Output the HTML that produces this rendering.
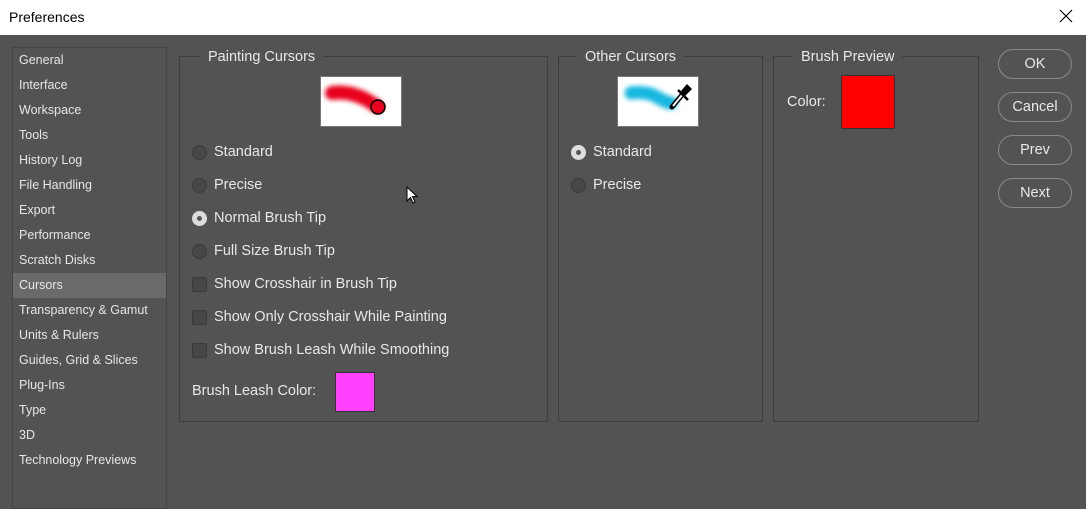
<!DOCTYPE html>
<html><head><style>
body{margin:0;width:1086px;height:497px;background:#535353;font-family:"Liberation Sans",sans-serif;position:relative;overflow:hidden;color:#dcdcdc}
.title{position:absolute;left:0;top:0;width:1086px;height:35px;background:#fff;color:#000;font-size:14px}
.title span{position:absolute;left:9px;top:9px}
.side{position:absolute;left:12px;top:47px;width:153px;height:460px;border:1px solid #444}
.side div{height:25px;line-height:25px;padding-left:6px;font-size:12.5px;color:#e6e6e6}
.side .sel{background:#6a6a6a}
.box{position:absolute;border:1px solid #3e3e3e;top:56px;height:364px}
.lg{position:absolute;top:-8px;background:#535353;padding:0 8px;font-size:14.5px;color:#e8e8e8}
.lbl{position:absolute;font-size:14.5px;color:#e8e8e8}
.rad{position:absolute;width:13px;height:13px;border:1px solid #3a3a3a;border-radius:50%;background:#474747}
.rad.on{background:#ddd;border-color:#ddd}
.rad.on::after{content:"";position:absolute;left:4px;top:4px;width:5px;height:5px;border-radius:50%;background:#555}
.chk{position:absolute;width:13px;height:13px;border:1px solid #3a3a3a;border-radius:2px;background:#474747}
.btn{position:absolute;left:998px;width:72px;height:28px;border:1px solid #8a8a8a;border-radius:15px;text-align:center;line-height:29px;font-size:14.5px;color:#e8e8e8}
</style></head><body>
<div class="title"><span>Preferences</span>
<svg style="position:absolute;left:1059px;top:9px" width="14" height="14"><path d="M1 1L13 13M13 1L1 13" stroke="#000" stroke-width="1.2"/></svg></div>
<div class="side">
<div>General</div><div>Interface</div><div>Workspace</div><div>Tools</div><div>History Log</div><div>File Handling</div><div>Export</div><div>Performance</div><div>Scratch Disks</div><div class="sel">Cursors</div><div>Transparency &amp; Gamut</div><div>Units &amp; Rulers</div><div>Guides, Grid &amp; Slices</div><div>Plug-Ins</div><div>Type</div><div>3D</div><div>Technology Previews</div>
</div>
<div class="box" style="left:179px;width:367px">
<span class="lg" style="left:20px">Painting Cursors</span>
<svg style="position:absolute;left:140px;top:19px" width="82" height="51"><defs><filter id="b" x="-50%" y="-100%" width="200%" height="300%"><feGaussianBlur stdDeviation="2.5"/></filter></defs><rect x="0.5" y="0.5" width="81" height="50" fill="#fff" stroke="#777"/><path d="M12 17 Q35 14 56 30" stroke="#e8001c" stroke-width="14" fill="none" stroke-linecap="round" filter="url(#b)"/><circle cx="58" cy="31" r="7" fill="#e8001c" stroke="#000" stroke-width="1.5"/></svg>
<div class="rad" style="left:12px;top:88px"></div><span class="lbl" style="left:34px;top:87px">Standard</span>
<div class="rad" style="left:12px;top:121px"></div><span class="lbl" style="left:34px;top:120px">Precise</span>
<div class="rad on" style="left:12px;top:154px"></div><span class="lbl" style="left:34px;top:153px">Normal Brush Tip</span>
<div class="rad" style="left:12px;top:187px"></div><span class="lbl" style="left:34px;top:186px">Full Size Brush Tip</span>
<div class="chk" style="left:12px;top:220px"></div><span class="lbl" style="left:34px;top:219px">Show Crosshair in Brush Tip</span>
<div class="chk" style="left:12px;top:253px"></div><span class="lbl" style="left:34px;top:252px">Show Only Crosshair While Painting</span>
<div class="chk" style="left:12px;top:286px"></div><span class="lbl" style="left:34px;top:285px">Show Brush Leash While Smoothing</span>
<span class="lbl" style="left:12px;top:326px">Brush Leash Color:</span>
<div style="position:absolute;left:155px;top:315px;width:38px;height:38px;background:#ff40ff;border:1px solid #333"></div>
</div>
<div class="box" style="left:558px;width:203px">
<span class="lg" style="left:18px">Other Cursors</span>
<svg style="position:absolute;left:58px;top:19px" width="82" height="51"><rect x="0.5" y="0.5" width="81" height="50" fill="#fff" stroke="#777"/><path d="M14 17 Q30 15 40 21 T54 27" stroke="#14b8e0" stroke-width="13" fill="none" stroke-linecap="round" filter="url(#b)"/><path d="M55 31 L65 19" stroke="#000" stroke-width="5" stroke-linecap="round"/><path d="M56 30 L65 19" stroke="#fff" stroke-width="2"/><path d="M64 15 L70 8 L75 13 L68 20Z" fill="#000"/><path d="M61 14 L71 24" stroke="#000" stroke-width="2.5"/></svg>
<div class="rad on" style="left:12px;top:88px"></div><span class="lbl" style="left:34px;top:87px">Standard</span>
<div class="rad" style="left:12px;top:121px"></div><span class="lbl" style="left:34px;top:120px">Precise</span>
</div>
<div class="box" style="left:773px;width:204px">
<span class="lg" style="left:19px">Brush Preview</span>
<span class="lbl" style="left:13px;top:37px">Color:</span>
<div style="position:absolute;left:67px;top:18px;width:52px;height:52px;background:#f00;border:1px solid #333"></div>
</div>
<div class="btn" style="top:49px">OK</div>
<div class="btn" style="top:92px">Cancel</div>
<div class="btn" style="top:135px">Prev</div>
<div class="btn" style="top:178px">Next</div>
<svg style="position:absolute;left:406px;top:186px" width="12" height="20"><path d="M1 1 L1 15 L4.5 11.5 L7 17 L9 16 L6.5 10.5 L11 10.5Z" fill="#fff" stroke="#000"/></svg>
</body></html>
